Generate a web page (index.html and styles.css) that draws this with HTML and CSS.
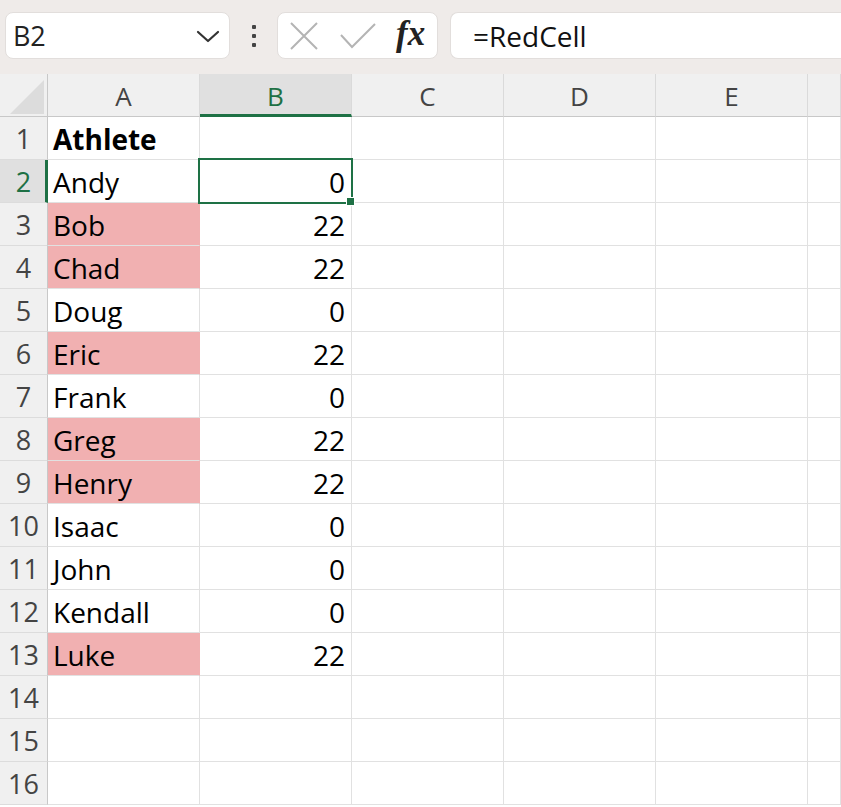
FILE: index.html
```html
<!DOCTYPE html>
<html>
<head>
<meta charset="utf-8">
<link rel="stylesheet" href="styles.css">
</head>
<body>
<div class="toolbar">
  <div class="namebox">
    <span class="name">B2</span>
    <svg class="chev" width="24" height="14" viewBox="0 0 24 14"><path d="M2 2 L12 11 L22 2" fill="none" stroke="#333" stroke-width="2.2" stroke-linecap="round" stroke-linejoin="round"/></svg>
  </div>
  <div class="dots"><span></span><span></span><span></span></div>
  <div class="fxbox">
    <svg width="30" height="28" viewBox="0 0 30 28"><path d="M2 1 L28 27 M28 1 L2 27" stroke="#b4b4b4" stroke-width="2" fill="none"/></svg>
    <svg width="38" height="28" viewBox="0 0 38 28"><path d="M2 13 L13 25 L36 2" stroke="#b4b4b4" stroke-width="2" fill="none"/></svg>
    <span class="fx">fx</span>
  </div>
  <div class="formula">=RedCell</div>
</div>
<div class="grid">
  <div class="corner"><div class="tri"></div></div>
  <div class="ch">A</div><div class="ch sel">B</div><div class="ch">C</div><div class="ch">D</div><div class="ch">E</div><div class="ch last"></div>

  <div class="rh">1</div><div class="c b">Athlete</div><div class="c"></div><div class="c"></div><div class="c"></div><div class="c"></div><div class="c"></div>
  <div class="rh sel">2</div><div class="c">Andy</div><div class="c n active">0</div><div class="c"></div><div class="c"></div><div class="c"></div><div class="c"></div>
  <div class="rh">3</div><div class="c red">Bob</div><div class="c n">22</div><div class="c"></div><div class="c"></div><div class="c"></div><div class="c"></div>
  <div class="rh">4</div><div class="c red">Chad</div><div class="c n">22</div><div class="c"></div><div class="c"></div><div class="c"></div><div class="c"></div>
  <div class="rh">5</div><div class="c">Doug</div><div class="c n">0</div><div class="c"></div><div class="c"></div><div class="c"></div><div class="c"></div>
  <div class="rh">6</div><div class="c red">Eric</div><div class="c n">22</div><div class="c"></div><div class="c"></div><div class="c"></div><div class="c"></div>
  <div class="rh">7</div><div class="c">Frank</div><div class="c n">0</div><div class="c"></div><div class="c"></div><div class="c"></div><div class="c"></div>
  <div class="rh">8</div><div class="c red">Greg</div><div class="c n">22</div><div class="c"></div><div class="c"></div><div class="c"></div><div class="c"></div>
  <div class="rh">9</div><div class="c red">Henry</div><div class="c n">22</div><div class="c"></div><div class="c"></div><div class="c"></div><div class="c"></div>
  <div class="rh">10</div><div class="c">Isaac</div><div class="c n">0</div><div class="c"></div><div class="c"></div><div class="c"></div><div class="c"></div>
  <div class="rh">11</div><div class="c">John</div><div class="c n">0</div><div class="c"></div><div class="c"></div><div class="c"></div><div class="c"></div>
  <div class="rh">12</div><div class="c">Kendall</div><div class="c n">0</div><div class="c"></div><div class="c"></div><div class="c"></div><div class="c"></div>
  <div class="rh">13</div><div class="c red">Luke</div><div class="c n">22</div><div class="c"></div><div class="c"></div><div class="c"></div><div class="c"></div>
  <div class="rh">14</div><div class="c"></div><div class="c"></div><div class="c"></div><div class="c"></div><div class="c"></div><div class="c"></div>
  <div class="rh">15</div><div class="c"></div><div class="c"></div><div class="c"></div><div class="c"></div><div class="c"></div><div class="c"></div>
  <div class="rh">16</div><div class="c"></div><div class="c"></div><div class="c"></div><div class="c"></div><div class="c"></div><div class="c"></div>
</div>
</body>
</html>
```
FILE: styles.css
```css
* { box-sizing: border-box; }
html, body { margin: 0; padding: 0; }
body {
  width: 841px;
  height: 807px;
  overflow: hidden;
  background: #ffffff;
  font-family: "Open Sans", "Noto Sans", sans-serif;
  color: #000;
}
.toolbar {
  height: 74px;
  background: #efebe9;
  display: flex;
  align-items: flex-start;
  padding: 12px 0 0 5px;
}
.namebox {
  width: 225px;
  height: 47px;
  background: #fff;
  border: 1px solid #e2dedc;
  border-radius: 8px;
  display: flex;
  align-items: center;
  justify-content: space-between;
  padding: 0 9px 0 7px;
}
.name { font-size: 27px; color: #222; letter-spacing: -0.3px; }
.chev { margin-top: 2px; }
.dots {
  width: 47px;
  height: 47px;
  display: flex;
  flex-direction: column;
  align-items: center;
  justify-content: center;
  gap: 5px;
}
.dots span { width: 4px; height: 4px; background: #444; display: block; border-radius: 1px; }
.fxbox {
  width: 161px;
  height: 47px;
  background: #fff;
  border: 1px solid #e2dedc;
  border-radius: 8px;
  display: flex;
  align-items: center;
  padding: 0 0 0 11px;
  gap: 20px;
}
.fxbox svg { display: block; }
.fx {
  font-family: "Liberation Serif", serif;
  font-style: italic;
  font-weight: bold;
  font-size: 35px;
  color: #222;
  margin-left: -1px;
  margin-top: -4px;
}
.formula {
  margin-left: 12px;
  flex: 1;
  height: 47px;
  background: #fff;
  border: 1px solid #e2dedc;
  border-right: none;
  border-radius: 8px 0 0 8px;
  display: flex;
  align-items: center;
  padding-left: 22px;
  font-size: 28px;
  color: #111;
}
.grid {
  display: grid;
  grid-template-columns: 48px 152px 152px 152px 152px 152px 33px;
  grid-template-rows: repeat(17, 43px);
}
.corner {
  background: #f0f0f0;
  border-right: 1px solid #c8c8c8;
  border-bottom: 1px solid #c8c8c8;
  position: relative;
}
.tri {
  position: absolute;
  left: 10px;
  top: 6px;
  width: 34px;
  height: 34px;
  background: #dcdcdc;
  clip-path: polygon(100% 0, 100% 100%, 0 100%);
}
.ch {
  background: #f0f0f0;
  border-right: 1px solid #dadada;
  border-bottom: 1px solid #c8c8c8;
  display: flex;
  align-items: center;
  justify-content: center;
  font-size: 26px;
  color: #444;
  padding-top: 2px;
}
.ch.sel {
  background: #e0e0e0;
  color: #1e7145;
  border-bottom: 3px solid #1e7145;
  padding-top: 4px;
}
.rh {
  background: #f0f0f0;
  border-right: 1px solid #c8c8c8;
  border-bottom: 1px solid #dcdcdc;
  display: flex;
  align-items: center;
  justify-content: center;
  font-size: 27px;
  color: #444;
  padding-top: 1px;
}
.rh.sel {
  background: #e0e0e0;
  color: #1e7145;
  border-right: 3px solid #1e7145;
  padding-left: 2px;
}
.c {
  border-right: 1px solid #e1e1e1;
  border-bottom: 1px solid #e1e1e1;
  display: flex;
  align-items: center;
  padding: 2px 6px 0 5px;
  font-size: 28px;
  white-space: nowrap;
}
.c.b { font-weight: bold; }
.c.n { justify-content: flex-end; }
.c.red { background: #f1b0b1; border-right-color: #f1b0b1; }
.c.active { position: relative; }
.c.active::after {
  content: "";
  position: absolute;
  left: -2px;
  top: -2px;
  right: -2px;
  bottom: -2px;
  border: 2px solid #1e7145;
  pointer-events: none;
}
.c.active::before {
  content: "";
  position: absolute;
  right: -4px;
  bottom: -4px;
  width: 7px;
  height: 7px;
  background: #1e7145;
  border: 1px solid #fff;
  z-index: 2;
}
```
